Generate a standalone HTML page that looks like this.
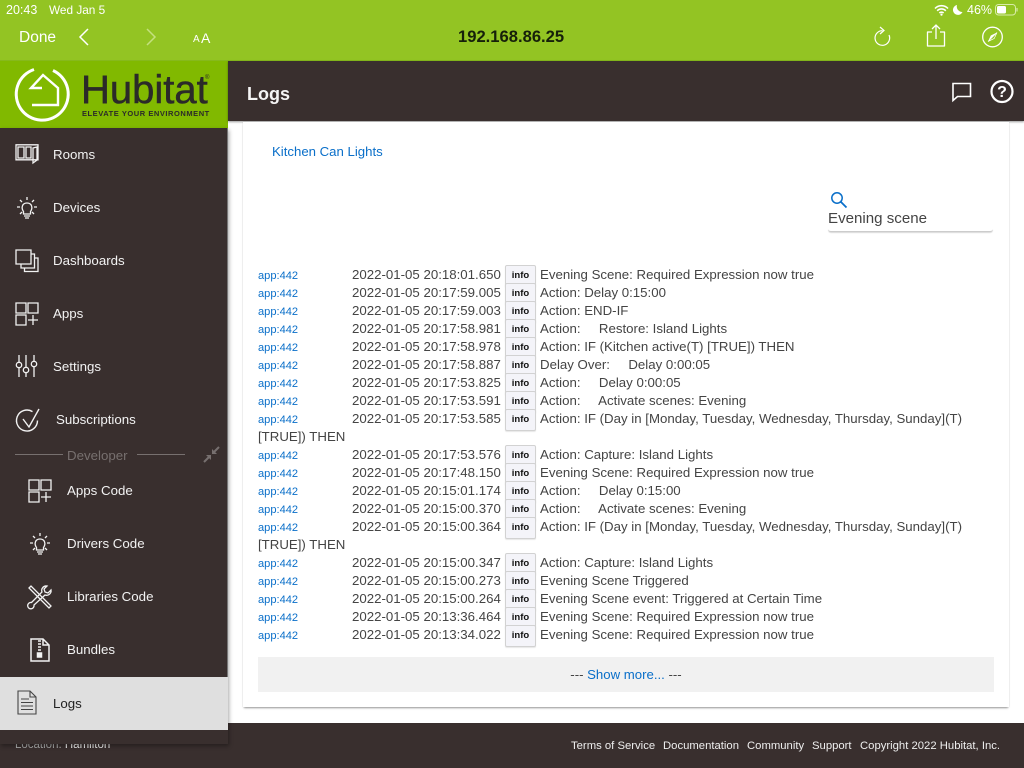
<!DOCTYPE html>
<html><head><meta charset="utf-8"><title>Logs</title>
<style>
html,body{margin:0;padding:0;width:1024px;height:768px;overflow:hidden;background:#fff;font-family:"Liberation Sans",sans-serif;}
.a{position:absolute;white-space:pre;}
#safari{position:absolute;left:0;top:0;width:1024px;height:60px;background:#93c423;border-bottom:1px solid #86b91c;}
#logo{position:absolute;left:0;top:61px;width:228px;height:67px;background:#81b900;}
#side{position:absolute;left:0;top:128px;width:228px;height:616px;background:#392f2e;box-shadow:1px 2px 4px rgba(0,0,0,.35);}
#head{position:absolute;left:228px;top:61px;width:796px;height:60px;background:#392f2e;box-shadow:0 1px 2px rgba(0,0,0,.4);}
#card{position:absolute;left:243px;top:122px;width:766px;height:585px;background:#fff;box-shadow:0 2px 2px -1px rgba(0,0,0,.4),0 0 1px rgba(0,0,0,.2);}
#foot{position:absolute;left:0;top:723px;width:1024px;height:45px;background:#392f2e;}
.n{position:absolute;color:#f2f2f2;font-size:13.3px;line-height:18px;white-space:pre;}
.r{position:absolute;left:0;width:1024px;height:18px;line-height:18px;font-size:13.25px;color:#444;}
.r span,.r a,.r b{position:absolute;white-space:pre;top:0;}
.r a{left:258px;font-size:11.1px;color:#0a6fc9;top:1px;}
.r .t{left:352px;}
.r b{left:505px;top:-8px;width:31px;height:27px;line-height:36px;text-align:center;font-size:9.5px;color:#111;}
.r .m{left:540px;}
.btn{position:absolute;left:505px;width:29px;height:20px;background:#f4f4f9;border:1px solid #d2d2d2;border-radius:2px;box-shadow:0 1px 1px rgba(0,0,0,.1);}
svg{position:absolute;overflow:visible;}
.ic{fill:none;stroke:#f2f2f2;stroke-width:1.3;}
</style></head><body>

<div id="safari"></div>
<div class="a" style="left:6px;top:3px;font-size:12.5px;line-height:14px;color:#fff;">20:43</div>
<div class="a" style="left:49px;top:3px;font-size:11.8px;line-height:14px;color:#fff;">Wed Jan 5</div>
<div class="a" style="left:19px;top:29px;font-size:15.5px;line-height:18px;color:#fff;">Done</div>
<svg style="left:78px;top:28px" width="12" height="18"><path d="M10 1L2 9l8 8" fill="none" stroke="#fff" stroke-width="1.5"/></svg>
<svg style="left:145px;top:28px" width="12" height="18"><path d="M2 1l8 8-8 8" fill="none" stroke="#c4e07f" stroke-width="1.5"/></svg>
<div class="a" style="left:193px;top:34px;font-size:10px;line-height:12px;color:#fff;">A</div>
<div class="a" style="left:201px;top:30px;font-size:14px;line-height:17px;color:#fff;">A</div>
<div class="a" style="left:458px;top:27px;font-size:16.6px;line-height:20px;font-weight:bold;color:#16200a;">192.168.86.25</div>

<svg style="left:934px;top:4px" width="15" height="12"><path d="M1 4.500a9 9 0 0 1 13 0M3.200 6.800a6 6 0 0 1 8.600 0M5.400 9a3 3 0 0 1 4.200 0" fill="none" stroke="#fff" stroke-width="1.600"/><circle cx="7.500" cy="10.600" r="1.100" fill="#fff"/></svg>
<svg style="left:952px;top:4px" width="11" height="12"><path d="M5 1a5 5 0 1 0 5.500 7A5.500 5.500 0 0 1 5 1z" fill="#fff"/></svg>
<div class="a" style="left:967px;top:3px;font-size:12.5px;line-height:14px;color:#fff;">46%</div>
<svg style="left:995px;top:4px" width="24" height="12"><rect x=".5" y=".5" width="20" height="10.500" rx="3" fill="none" stroke="#d8eba8"/><rect x="2" y="2" width="9" height="7.500" rx="1.500" fill="#fff"/><path d="M22 4v3.500" stroke="#d8eba8" stroke-width="1.200"/></svg>

<svg style="left:874px;top:28px" width="18" height="20"><path d="M8.500 2.700A7.300 7.300 0 1 0 15 7" fill="none" stroke="#fff" stroke-width="1.200"/><path d="M6 -1l4 3.500L6 6" fill="none" stroke="#fff" stroke-width="1.200"/></svg>
<svg style="left:926px;top:24px" width="20" height="24"><path d="M6 8H1.500v14h17V8H14" fill="none" stroke="#fff" stroke-width="1.300" stroke-linejoin="round"/><path d="M10 15V1.500M6 5l4-4 4 4" fill="none" stroke="#fff" stroke-width="1.300"/></svg>
<svg style="left:981px;top:26px" width="22" height="22"><circle cx="11.500" cy="11" r="9.800" fill="none" stroke="#fff" stroke-width="1.300"/><path d="M16 6.500L9.800 9.500 7 15.500z" fill="#fff"/><path d="M16 6.500L13.200 12.500 7 15.500z" fill="none" stroke="#fff" stroke-width=".7"/></svg>

<div id="logo"></div>
<svg style="left:15px;top:67px" width="56" height="56"><path d="M38 3.500A26 26 0 1 1 19 2.500" fill="none" stroke="#fff" stroke-width="3"/><path d="M27 21H16L28 8 43 21V38H17" fill="none" stroke="#fff" stroke-width="2.400"/></svg>
<div class="a" style="left:81px;top:65px;font-size:40px;line-height:50px;color:#2b2a29;-webkit-text-stroke:.5px #2b2a29;">Hubitat</div>
<div class="a" style="left:205px;top:75px;font-size:6px;line-height:7px;color:#2b2a29;">®</div>
<div class="a" style="left:82px;top:109px;font-size:7.500px;font-weight:bold;line-height:9px;color:#2b2a29;letter-spacing:.55px;">ELEVATE YOUR ENVIRONMENT</div>

<div id="foot"></div>
<div class="a" style="left:15px;top:737px;font-size:11.500px;line-height:16px;color:#aaa;">Location: <span style="color:#eee">Hamilton</span></div>
<div id="side"></div>
<div class="a" style="left:227px;top:128px;width:1px;height:595px;background:#777;"></div>
<div class="n" style="left:53px;top:146px;">Rooms</div>
<div class="n" style="left:53px;top:199px;">Devices</div>
<div class="n" style="left:53px;top:252px;">Dashboards</div>
<div class="n" style="left:53px;top:305px;">Apps</div>
<div class="n" style="left:53px;top:358px;">Settings</div>
<div class="n" style="left:56px;top:411px;">Subscriptions</div>
<div class="n" style="left:67px;top:447px;color:#77706f;">Developer</div>
<div class="a" style="left:15px;top:454px;width:48px;height:1px;background:#77706f;"></div>
<div class="a" style="left:137px;top:454px;width:48px;height:1px;background:#77706f;"></div>
<div class="n" style="left:67px;top:482px;">Apps Code</div>
<div class="n" style="left:67px;top:535px;">Drivers Code</div>
<div class="n" style="left:67px;top:588px;">Libraries Code</div>
<div class="n" style="left:67px;top:641px;">Bundles</div>
<div class="a" style="left:0;top:677px;width:228px;height:53px;background:#dfdfdf;"></div>
<div class="n" style="left:53px;top:695px;color:#222;">Logs</div>

<!-- sidebar icons -->
<svg class="ic" style="left:15px;top:144px" width="24" height="20"><path d="M1 .8h22v15H1zM3 3h6v11H3zM11 3h5v11h-5z"/><path d="M18 4v15l4-3V3z"/></svg>
<svg class="ic" style="left:16px;top:196px" width="22" height="24"><path d="M7.500 15.500C5 12 6 7 11 7s6 5 3.500 8.500V18h-7zM8 20h6M9 22h4M11 1v3M1 11h3M18 11h3M4 4l2 2M18 4l-2 2M4 18l2-2M18 18l-2-2"/></svg>
<svg class="ic" style="left:15px;top:249px" width="24" height="24"><path d="M1 1h15v14H1z"/><path d="M16 5h3.500v14H6v-4"/><path d="M19.500 9H23v13.500H9.500V19"/></svg>
<svg class="ic" style="left:15px;top:302px" width="24" height="24"><path d="M1 1h10v10H1zM13 1h10v10H13zM1 13h10v10H1zM18 13v10M13 18h10"/></svg>
<svg class="ic" style="left:15px;top:354px" width="24" height="24"><path d="M4 1v7M4 14v9M11 1v12M11 19v4M19 1v6M19 13v10"/><circle cx="4" cy="11" r="2.700"/><circle cx="11" cy="16" r="2.700"/><circle cx="19" cy="10" r="2.700"/></svg>
<svg class="ic" style="left:16px;top:408px;stroke-width:1.400" width="24" height="24"><path d="M16.500 3.600A10.500 10.500 0 1 0 21.500 12.500"/><path d="M7 11l6 8L23 1"/></svg>
<svg style="left:204px;top:447px" width="15" height="15"><path d="M8 2v5h5z" fill="#77706f"/><path d="M10 5l5-5" stroke="#77706f" stroke-width="2"/><path d="M7 13V8H2z" fill="#77706f"/><path d="M5 10l-5 5" stroke="#77706f" stroke-width="2"/></svg>
<svg class="ic" style="left:28px;top:479px" width="24" height="24"><path d="M1 1h10v10H1zM13 1h10v10H13zM1 13h10v10H1zM18 13v10M13 18h10"/></svg>
<svg class="ic" style="left:29px;top:532px" width="22" height="24"><path d="M7.500 15.500C5 12 6 7 11 7s6 5 3.500 8.500V18h-7zM8 20h6M9 22h4M11 1v3M1 11h3M18 11h3M4 4l2 2M18 4l-2 2M4 18l2-2M18 18l-2-2"/></svg>
<svg class="ic" style="left:28px;top:585px" width="24" height="24"><path d="M1 3l2-2 20 20-2 2zM23 5a4.500 4.500 0 0 1-6 5L6 20a3.200 3.200 0 1 1-2.500-2.500L14 7a4.500 4.500 0 0 1 5-6l-3 3 1 3 3 1z"/></svg>
<svg class="ic" style="left:30px;top:638px;stroke-width:1.500" width="20" height="24"><path d="M1 1h12l6 6v16H1zM13 1v6h6M8 3h3M8 6h3M8 9h3M8 12h3"/><rect x="7.500" y="15" width="4" height="4" fill="#f2f2f2"/></svg>
<svg style="left:17px;top:690px;fill:none;stroke:#444;stroke-width:1.100" width="20" height="26"><path d="M1 1h12l6 6v17H1zM13 1v6h6M4 9h8M4 12.500h12M4 16h12M4 19.500h12"/></svg>

<div id="head"></div>
<div class="a" style="left:247px;top:83px;font-size:18px;line-height:22px;font-weight:bold;color:#f5f5f5;">Logs</div>
<svg style="left:952px;top:82px" width="21" height="20"><path d="M1 1.500h17.500v13H5.500L1 18.500z" fill="none" stroke="#fff" stroke-width="1.600"/></svg>
<svg style="left:989.500px;top:80px" width="24" height="24"><circle cx="12" cy="11.500" r="10.500" fill="none" stroke="#fff" stroke-width="2.200"/><text x="12" y="17" text-anchor="middle" font-family="Liberation Sans" font-size="16" font-weight="bold" fill="#fff">?</text></svg>

<div id="card"></div>
<div class="a" style="left:272px;top:144px;font-size:13.200px;line-height:16px;color:#0a6fc9;">Kitchen Can Lights</div>
<svg style="left:830px;top:191px" width="18" height="18"><circle cx="7" cy="7" r="5.200" fill="none" stroke="#0a6fc9" stroke-width="1.500"/><path d="M10.500 10.500L16.500 16.500" stroke="#0a6fc9" stroke-width="1.800"/></svg>
<div class="a" style="left:828px;top:210px;font-size:15.100px;line-height:18px;color:#444;">Evening scene</div>
<div class="a" style="left:828px;top:229px;width:165px;height:2px;background:#fff;border-bottom:1px solid #ccc;border-radius:0 0 5px 5px;box-shadow:0 1px 1px rgba(0,0,0,.15);"></div>

<!-- button backgrounds -->
<div class="btn" style="top:265px"></div><div class="btn" style="top:283px"></div><div class="btn" style="top:301px"></div><div class="btn" style="top:319px"></div><div class="btn" style="top:337px"></div><div class="btn" style="top:355px"></div><div class="btn" style="top:373px"></div><div class="btn" style="top:391px"></div><div class="btn" style="top:409px"></div>
<div class="btn" style="top:445px"></div><div class="btn" style="top:463px"></div><div class="btn" style="top:481px"></div><div class="btn" style="top:499px"></div><div class="btn" style="top:517px"></div>
<div class="btn" style="top:553px"></div><div class="btn" style="top:571px"></div><div class="btn" style="top:589px"></div><div class="btn" style="top:607px"></div><div class="btn" style="top:625px"></div>

<div class="r" style="top:266px"><a>app:442</a><span class="t">2022-01-05 20:18:01.650</span><b>info</b><span class="m">Evening Scene: Required Expression now true</span></div>
<div class="r" style="top:284px"><a>app:442</a><span class="t">2022-01-05 20:17:59.005</span><b>info</b><span class="m">Action: Delay 0:15:00</span></div>
<div class="r" style="top:302px"><a>app:442</a><span class="t">2022-01-05 20:17:59.003</span><b>info</b><span class="m">Action: END-IF</span></div>
<div class="r" style="top:320px"><a>app:442</a><span class="t">2022-01-05 20:17:58.981</span><b>info</b><span class="m">Action:     Restore: Island Lights</span></div>
<div class="r" style="top:338px"><a>app:442</a><span class="t">2022-01-05 20:17:58.978</span><b>info</b><span class="m">Action: IF (Kitchen active(T) [TRUE]) THEN</span></div>
<div class="r" style="top:356px"><a>app:442</a><span class="t">2022-01-05 20:17:58.887</span><b>info</b><span class="m">Delay Over:     Delay 0:00:05</span></div>
<div class="r" style="top:374px"><a>app:442</a><span class="t">2022-01-05 20:17:53.825</span><b>info</b><span class="m">Action:     Delay 0:00:05</span></div>
<div class="r" style="top:392px"><a>app:442</a><span class="t">2022-01-05 20:17:53.591</span><b>info</b><span class="m">Action:     Activate scenes: Evening</span></div>
<div class="r" style="top:410px"><a>app:442</a><span class="t">2022-01-05 20:17:53.585</span><b>info</b><span class="m">Action: IF (Day in [Monday, Tuesday, Wednesday, Thursday, Sunday](T)</span></div>
<div class="r" style="top:428px"><span style="left:258px">[TRUE]) THEN</span></div>
<div class="r" style="top:446px"><a>app:442</a><span class="t">2022-01-05 20:17:53.576</span><b>info</b><span class="m">Action: Capture: Island Lights</span></div>
<div class="r" style="top:464px"><a>app:442</a><span class="t">2022-01-05 20:17:48.150</span><b>info</b><span class="m">Evening Scene: Required Expression now true</span></div>
<div class="r" style="top:482px"><a>app:442</a><span class="t">2022-01-05 20:15:01.174</span><b>info</b><span class="m">Action:     Delay 0:15:00</span></div>
<div class="r" style="top:500px"><a>app:442</a><span class="t">2022-01-05 20:15:00.370</span><b>info</b><span class="m">Action:     Activate scenes: Evening</span></div>
<div class="r" style="top:518px"><a>app:442</a><span class="t">2022-01-05 20:15:00.364</span><b>info</b><span class="m">Action: IF (Day in [Monday, Tuesday, Wednesday, Thursday, Sunday](T)</span></div>
<div class="r" style="top:536px"><span style="left:258px">[TRUE]) THEN</span></div>
<div class="r" style="top:554px"><a>app:442</a><span class="t">2022-01-05 20:15:00.347</span><b>info</b><span class="m">Action: Capture: Island Lights</span></div>
<div class="r" style="top:572px"><a>app:442</a><span class="t">2022-01-05 20:15:00.273</span><b>info</b><span class="m">Evening Scene Triggered</span></div>
<div class="r" style="top:590px"><a>app:442</a><span class="t">2022-01-05 20:15:00.264</span><b>info</b><span class="m">Evening Scene event: Triggered at Certain Time</span></div>
<div class="r" style="top:608px"><a>app:442</a><span class="t">2022-01-05 20:13:36.464</span><b>info</b><span class="m">Evening Scene: Required Expression now true</span></div>
<div class="r" style="top:626px"><a>app:442</a><span class="t">2022-01-05 20:13:34.022</span><b>info</b><span class="m">Evening Scene: Required Expression now true</span></div>

<div class="a" style="left:258px;top:657px;width:736px;height:35px;line-height:35px;background:#f1f1f1;text-align:center;font-size:13.200px;color:#444;">--- <span style="color:#0a6fc9">Show more...</span> ---</div>

<div class="a" style="left:571px;top:738px;font-size:11.300px;line-height:16px;color:#eee;">Terms of Service</div>
<div class="a" style="left:663px;top:738px;font-size:11.300px;line-height:16px;color:#eee;">Documentation</div>
<div class="a" style="left:747px;top:738px;font-size:11.300px;line-height:16px;color:#eee;">Community</div>
<div class="a" style="left:812px;top:738px;font-size:11.300px;line-height:16px;color:#eee;">Support</div>
<div class="a" style="left:860px;top:738px;font-size:11.300px;line-height:16px;color:#eee;">Copyright 2022 Hubitat, Inc.</div>
</body></html>
